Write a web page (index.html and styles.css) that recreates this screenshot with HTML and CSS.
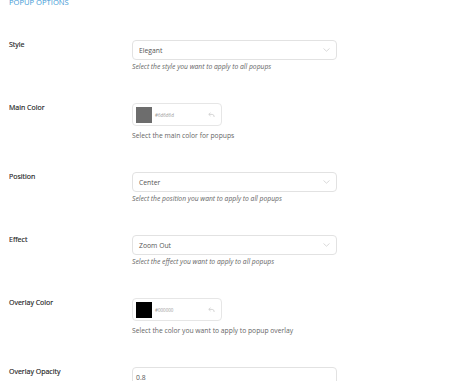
FILE: index.html
```html
<!DOCTYPE html>
<html>
<head>
<meta charset="utf-8">
<link rel="stylesheet" href="styles.css">
</head>
<body>
<div class="page">
  <h2 class="title">POPUP OPTIONS</h2>
  <div class="rows">
    <div class="row">
      <div class="label">Style</div>
      <div class="field">
        <div class="select"><span>Elegant</span><svg class="chev" width="7" height="4" viewBox="0 0 7 4"><path d="M0.5 0.5 L3.5 3.2 L6.5 0.5" fill="none" stroke="#cfcfcf" stroke-width="0.8"/></svg></div>
        <div class="desc italic">Select the style you want to apply to all popups</div>
      </div>
    </div>
    <div class="row">
      <div class="label">Main Color</div>
      <div class="field">
        <div class="picker">
          <span class="swatch grey"></span><span class="hex">#6d6d6d</span>
          <svg class="undo" width="7" height="6" viewBox="0 0 7 6"><path d="M2.5 0.8 L0.8 2.4 L2.5 4 M0.8 2.4 H4.2 Q6.2 2.4 6.2 5" fill="none" stroke="#d0d0d0" stroke-width="0.9"/></svg>
        </div>
        <div class="desc plain">Select the main color for popups</div>
      </div>
    </div>
    <div class="row">
      <div class="label">Position</div>
      <div class="field">
        <div class="select"><span>Center</span><svg class="chev" width="7" height="4" viewBox="0 0 7 4"><path d="M0.5 0.5 L3.5 3.2 L6.5 0.5" fill="none" stroke="#cfcfcf" stroke-width="0.8"/></svg></div>
        <div class="desc italic">Select the position you want to apply to all popups</div>
      </div>
    </div>
    <div class="row">
      <div class="label">Effect</div>
      <div class="field">
        <div class="select"><span>Zoom Out</span><svg class="chev" width="7" height="4" viewBox="0 0 7 4"><path d="M0.5 0.5 L3.5 3.2 L6.5 0.5" fill="none" stroke="#cfcfcf" stroke-width="0.8"/></svg></div>
        <div class="desc italic">Select the effect you want to apply to all popups</div>
      </div>
    </div>
    <div class="row">
      <div class="label">Overlay Color</div>
      <div class="field">
        <div class="picker">
          <span class="swatch black"></span><span class="hex">#000000</span>
          <svg class="undo" width="7" height="6" viewBox="0 0 7 6"><path d="M2.5 0.8 L0.8 2.4 L2.5 4 M0.8 2.4 H4.2 Q6.2 2.4 6.2 5" fill="none" stroke="#d0d0d0" stroke-width="0.9"/></svg>
        </div>
        <div class="desc plain">Select the color you want to apply to popup overlay</div>
      </div>
    </div>
    <div class="row">
      <div class="label">Overlay Opacity</div>
      <div class="field">
        <div class="input">0.8</div>
      </div>
    </div>
  </div>
</div>
</body>
</html>
```
FILE: styles.css
```css
html, body {
  margin: 0;
  padding: 0;
  background: #ffffff;
  overflow: hidden;
}
.page {
  padding-left: 9px;
  font-family: "Open Sans", "Noto Sans", sans-serif;
  color: #333;
}
.title {
  margin: -2px 0 0 0;
  font-size: 7.6px;
  line-height: 9px;
  font-weight: 400;
  color: #3f9ad6;
}
.rows {
  display: flex;
  flex-direction: column;
  gap: 32px;
  margin-top: 33px;
}
.row {
  display: grid;
  grid-template-columns: 123px 205px;
}
.label {
  font-size: 7px;
  line-height: 9px;
  font-weight: 400;
  color: #222;
  -webkit-text-stroke: 0.15px #222;
}
.field {
  display: flex;
  flex-direction: column;
}
.select, .input {
  box-sizing: border-box;
  height: 20px;
  border: 1px solid #e2e2e2;
  border-radius: 4px;
  display: flex;
  align-items: center;
  justify-content: space-between;
  padding: 0 6px 0 6px;
  font-size: 6.8px;
  color: #555;
}
.input {
  padding-left: 3px;
}
.desc {
  font-size: 6.75px;
  line-height: 9px;
  color: #666;
}
.italic {
  font-style: italic;
  margin-top: 2px;
}
.plain {
  margin-top: 5px;
}
.picker {
  box-sizing: border-box;
  width: 90px;
  height: 23px;
  border: 1px solid #e6e6e6;
  border-radius: 4px;
  display: flex;
  align-items: center;
  padding: 0 6px 0 3px;
}
.swatch {
  width: 16px;
  height: 16px;
  flex: none;
}
.grey { background: #6d6d6d; }
.black { background: #000; }
.hex {
  margin-left: 3px;
  font-size: 4.5px;
  color: #999;
  flex: 1;
}
.undo { flex: none; }
```
